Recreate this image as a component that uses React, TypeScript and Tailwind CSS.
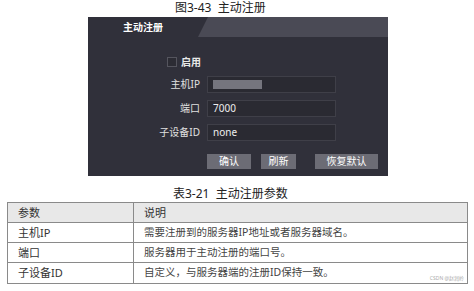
const fields = [
  { label: '主机IP', value: '', blurred: true },
  { label: '端口', value: '7000' },
  { label: '子设备ID', value: 'none' },
];

const rows = [
  { name: '主机IP', desc: '需要注册到的服务器IP地址或者服务器域名。' },
  { name: '端口', desc: '服务器用于主动注册的端口号。' },
  { name: '子设备ID', desc: '自定义，与服务器端的注册ID保持一致。' },
];

const App = () => {
  return (
    <div
      className="w-[474px] h-[291px] bg-white overflow-hidden text-[#222]"
      style={{ fontFamily: '"Noto Sans", "Noto Sans CJK SC", sans-serif' }}
    >
      <div className="h-[15px] pl-[175px] text-[12px] leading-[15px] text-[#222]">
        图3-43&nbsp; 主动注册
      </div>

      <div className="mt-[2px] ml-[88px] w-[300px] h-[159px] bg-[#30303a]">
        <div className="h-[20px] bg-[#4a4a55] flex">
          <div className="w-[120px] h-full bg-[#30303a] [clip-path:polygon(0_0,100%_0,calc(100%-10px)_100%,0_100%)] pl-[35px] text-[10px] font-bold leading-[20px] text-white">
            主动注册
          </div>
        </div>

        <div className="pt-[20px] pl-[79px] flex items-center gap-[4px] h-[30px]">
          <span className="w-[10px] h-[10px] border border-[#55555e] bg-[#2c2c34]" />
          <span className="text-[10px] text-[#e8e8e8] font-semibold">启用</span>
        </div>

        <div className="mt-[9px] flex flex-col gap-[7px]">
          {fields.map((f) => (
            <div key={f.label} className="flex items-center h-[17px]">
              <div className="w-[112px] text-right text-[10px] text-[#e0e0e0]">{f.label}</div>
              <div className="ml-[7px] w-[129px] h-[17px] bg-[#2a2a32] border border-[#3f3f48] flex items-center pl-[5px] text-[10px] text-[#eee]">
                {f.blurred ? <span className="w-[49px] h-[9px] bg-[#7d7d86] opacity-90" /> : f.value}
              </div>
            </div>
          ))}
        </div>

        <div className="mt-[13px] pl-[119px] flex h-[15px] text-[10px] text-white">
          <div className="w-[44px] bg-[#6c6c75] flex items-center justify-center">确认</div>
          <div className="ml-[10px] w-[35px] bg-[#6c6c75] flex items-center justify-center">刷新</div>
          <div className="ml-[19px] w-[63px] bg-[#6c6c75] flex items-center justify-center">恢复默认</div>
        </div>
      </div>

      <div className="h-[26px] pl-[173px] pt-[10px] text-[12px] leading-[15px] text-[#222]">
        表3-21&nbsp; 主动注册参数
      </div>

      <div className="relative ml-[7px] w-[461px] border border-[#8a8a8a] text-[11px] text-[#333]">
        <div className="flex h-[20px] bg-[#e8e8e8] border-b border-[#8a8a8a]">
          <div className="w-[126px] border-r border-[#8a8a8a] pl-[10px] leading-[19px]">参数</div>
          <div className="flex-1 pl-[10px] leading-[19px]">说明</div>
        </div>
        {rows.map((r, i) => (
          <div
            key={r.name}
            className={`flex h-[20px] ${i < rows.length - 1 ? 'border-b border-[#8a8a8a]' : ''}`}
          >
            <div className="w-[126px] border-r border-[#8a8a8a] pl-[10px] leading-[19px]">{r.name}</div>
            <div className="flex-1 pl-[10px] leading-[19px] text-[10.5px] text-[#444]">{r.desc}</div>
          </div>
        ))}
        <span className="absolute right-[3px] bottom-[2px] text-[5px] leading-[6px] text-[#aaa]">CSDN @赵润岭</span>
      </div>
    </div>
  );
};

export default App;
